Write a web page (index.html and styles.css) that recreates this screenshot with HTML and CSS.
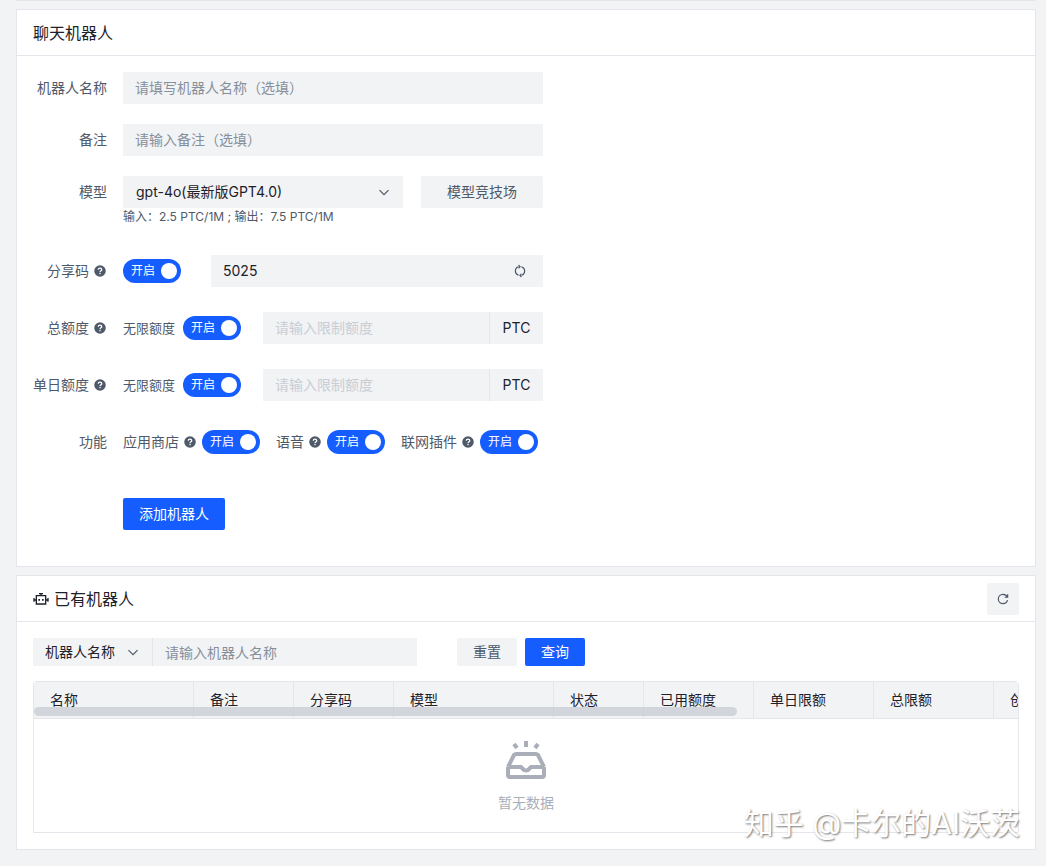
FILE: index.html
```
<!DOCTYPE html>
<html lang="zh-CN">
<head>
	<meta charset="UTF-8">
	<meta name="viewport" content="width=device-width, initial-scale=1.0">
	<title>聊天机器人</title>
	<link rel="stylesheet" href="styles.css">
</head>
<body>
	<svg class="symbols">
		<symbol id="icon-help" viewBox="0 0 48 48">
			<circle cx="24" cy="24" r="23" fill="currentColor"/>
			<path d="M17 19c0-4 3-7 7-7s7 3 7 6.500c0 5-7 5-7 10.500M24 32v5" fill="none" stroke="#fff" stroke-width="5"/>
		</symbol>
		<symbol id="icon-down" viewBox="0 0 48 48">
			<path d="M39.600 17.443 24.043 33 8.487 17.443" fill="none" stroke="currentColor" stroke-width="4"/>
		</symbol>
	</svg>
	<div class="prev-card"></div>
	<div class="card">
		<div class="card-header">
			<h2>聊天机器人</h2>
		</div>
		<form class="bot-form">
			<div class="form-item">
				<label class="item-label" for="bot-name">机器人名称</label>
				<div class="item-content">
					<input class="input" type="text" id="bot-name" placeholder="请填写机器人名称（选填）">
				</div>
			</div>
			<div class="form-item">
				<label class="item-label" for="remark">备注</label>
				<div class="item-content">
					<input class="input" type="text" id="remark" placeholder="请输入备注（选填）">
				</div>
			</div>
			<div class="form-item item-model">
				<label class="item-label" for="model">模型</label>
				<div class="item-content">
					<div class="select">
						<select id="model">
							<option>gpt-4o(最新版GPT4.0)</option>
						</select>
						<svg class="icon"><use href="#icon-down"/></svg>
					</div>
					<button type="button" class="btn btn-arena">模型竞技场</button>
				</div>
				<p class="price">输入：2.5 PTC/1M ; 输出：7.5 PTC/1M</p>
			</div>
			<div class="form-item item-wide">
				<label class="item-label" for="share-code">分享码 <svg class="help"><use href="#icon-help"/></svg></label>
				<div class="item-content">
					<label class="switch"><input type="checkbox" checked><span>开启</span></label>
					<div class="code">
						<input class="input" type="text" id="share-code" value="5025">
						<button type="button" class="sync" aria-label="刷新分享码">
							<svg class="icon" viewBox="0 0 48 48" fill="none" stroke="currentColor" stroke-width="4">
								<path d="M19 38.500C12 36 8 30 8 24c0-7 4-12 9-14.500M29 9.500C36 12 40 18 40 24c0 7-4 12-9 14.500"/>
								<path d="m20 3 6 6-6 6zM28 33l-6 6 6 6z" fill="currentColor" stroke-width="2"/>
							</svg>
						</button>
					</div>
				</div>
			</div>
			<div class="form-item item-wide">
				<label class="item-label" for="total">总额度 <svg class="help"><use href="#icon-help"/></svg></label>
				<div class="item-content">
					<label class="switch-text" for="total-unlimited">无限额度</label>
					<label class="switch"><input type="checkbox" id="total-unlimited" checked><span>开启</span></label>
					<div class="quota">
						<input class="input" type="text" id="total" placeholder="请输入限制额度" disabled>
						<span class="unit">PTC</span>
					</div>
				</div>
			</div>
			<div class="form-item item-wide">
				<label class="item-label" for="daily">单日额度 <svg class="help"><use href="#icon-help"/></svg></label>
				<div class="item-content">
					<label class="switch-text" for="daily-unlimited">无限额度</label>
					<label class="switch"><input type="checkbox" id="daily-unlimited" checked><span>开启</span></label>
					<div class="quota">
						<input class="input" type="text" id="daily" placeholder="请输入限制额度" disabled>
						<span class="unit">PTC</span>
					</div>
				</div>
			</div>
			<div class="form-item item-feature">
				<span class="item-label">功能</span>
				<div class="item-content">
					<div class="feature">
						<label for="store">应用商店</label>
						<svg class="help"><use href="#icon-help"/></svg>
						<label class="switch"><input type="checkbox" id="store" checked><span>开启</span></label>
					</div>
					<div class="feature">
						<label for="voice">语音</label>
						<svg class="help"><use href="#icon-help"/></svg>
						<label class="switch"><input type="checkbox" id="voice" checked><span>开启</span></label>
					</div>
					<div class="feature">
						<label for="plugin">联网插件</label>
						<svg class="help"><use href="#icon-help"/></svg>
						<label class="switch"><input type="checkbox" id="plugin" checked><span>开启</span></label>
					</div>
				</div>
			</div>
			<button type="button" class="btn btn-primary btn-add">添加机器人</button>
		</form>
	</div>

	<div class="card">
		<div class="card-header">
			<svg class="robot" viewBox="0 0 48 48" fill="none" stroke="currentColor" stroke-width="4">
				<path d="M10 14h28v25H10zM24 14V6M18 8h12M3 21v11M45 21v11M3 27h6M39 27h6"/>
				<path d="M16 24h5v5h-5zM27 24h5v5h-5z" fill="currentColor" stroke="none"/>
			</svg>
			<h2>已有机器人</h2>
			<button type="button" class="btn btn-refresh" aria-label="刷新">
				<svg class="icon" viewBox="0 0 48 48" fill="none" stroke="currentColor" stroke-width="4">
					<path d="M38.837 18C36.463 12.136 30.715 8 24 8 15.163 8 8 15.163 8 24s7.163 16 16 16c7.455 0 13.720-5.100 15.496-12M40 8v10H30"/>
				</svg>
			</button>
		</div>
		<div class="list-body">
			<div class="search">
				<div class="search-group">
					<div class="select">
						<select aria-label="搜索字段">
							<option>机器人名称</option>
						</select>
						<svg class="icon"><use href="#icon-down"/></svg>
					</div>
					<input class="input" type="text" aria-label="搜索内容" placeholder="请输入机器人名称">
				</div>
				<button type="button" class="btn btn-small">重置</button>
				<button type="button" class="btn btn-small btn-primary">查询</button>
			</div>
			<div class="table-box">
				<div class="table-scroll">
					<table>
						<colgroup>
							<col class="w160"><col class="w100"><col class="w100"><col class="w160"><col class="w90"><col class="w110"><col class="w120"><col class="w120"><col class="w160">
						</colgroup>
						<thead>
							<tr>
								<th>名称</th>
								<th>备注</th>
								<th>分享码</th>
								<th>模型</th>
								<th>状态</th>
								<th>已用额度</th>
								<th>单日限额</th>
								<th>总限额</th>
								<th>创建</th>
							</tr>
						</thead>
					</table>
				</div>
				<div class="scrollbar"></div>
				<div class="empty">
					<svg viewBox="0 0 48 48" fill="none" stroke="currentColor" stroke-width="4">
						<path d="M24 4v6M33 11l3-4M15 11l-3-4M6 30l6-12q1-1 2-1h20q1 0 2 1l6 12M6 30v8q0 2 2 2h32q2 0 2-2v-8M6 30h13l3 3q2 1 4 0l3-3h13"/>
					</svg>
					<p>暂无数据</p>
				</div>
			</div>
		</div>
		<div class="watermark">知乎 @卡尔的AI沃茨</div>
	</div>
</body>
</html>
```

FILE: styles.css
```
* {
	margin: 0;
	padding: 0;
	box-sizing: border-box;
}
body {
	padding: 0 10px 16px 16px;
	background: #f2f3f5;
	color: #1d2129;
	font-family: Inter, "Noto Sans CJK SC", sans-serif;
	font-size: 14px;
	line-height: 22px;
}
input,button,select {
	border: none;
	outline: none;
	font: inherit;
	color: inherit;
}
button {
	cursor: pointer;
}
.symbols {
	display: none;
}
.icon {
	width: 14px;
	height: 14px;
}
.help {
	flex: none;
	width: 12px;
	height: 12px;
	color: #4e5969;
}
.prev-card {
	height: 1px;
	background: #e5e6eb;
}

/* 卡片 */
.card {
	position: relative;
	margin-top: 8px;
	background: #fff;
	border: 1px solid #e5e6eb;
}
.card-header {
	display: flex;
	align-items: center;
	height: 46px;
	padding: 0 16px;
	border-bottom: 1px solid #e5e6eb;
}
.card-header h2 {
	font-size: 16px;
	font-weight: 400;
	line-height: 24px;
}
.robot {
	width: 16px;
	height: 16px;
	margin-right: 5px;
}

/* 按钮 */
.btn {
	height: 32px;
	background: #f2f3f5;
	color: #4e5969;
	border-radius: 2px;
}
.btn-primary {
	background: #165dff;
	color: #fff;
}
.btn-small {
	width: 60px;
	height: 28px;
}
.btn-refresh {
	display: flex;
	align-items: center;
	justify-content: center;
	width: 32px;
	margin-left: auto;
}
.btn-add {
	width: 102px;
	margin: 40px 0 0 90px;
}
.btn-arena {
	width: 122px;
	margin-left: 18px;
}

/* 输入框 */
.input {
	width: 100%;
	height: 32px;
	padding: 0 12px 1px;
	background: #f2f3f5;
}
.input::placeholder {
	color: #86909c;
	opacity: 1;
}
.input:disabled::placeholder {
	color: #c9cdd4;
}
.select {
	position: relative;
	flex: 1;
}
.select select {
	appearance: none;
	width: 100%;
	height: 32px;
	padding: 0 13px;
	background: #f2f3f5;
}
.select .icon {
	position: absolute;
	right: 12px;
	top: 50%;
	margin-top: -7px;
	color: #4e5969;
	pointer-events: none;
}

/* 表单 */
.bot-form {
	padding: 16px 16px 36px;
}
.form-item {
	display: grid;
	grid-template-columns: 74px minmax(0, 420px);
	column-gap: 16px;
	align-items: center;
	margin-bottom: 20px;
}
.item-label {
	display: flex;
	align-items: center;
	justify-content: flex-end;
	gap: 5px;
	color: #4e5969;
	white-space: nowrap;
}
.item-label .help {
	margin-right: 1px;
}
.item-content {
	display: flex;
	align-items: center;
	min-height: 32px;
	color: #4e5969;
}
.item-content .input,
.item-content .select {
	color: #1d2129;
}
.item-model,
.item-wide {
	margin-bottom: 25px;
}
.price {
	grid-column: 2;
	margin-bottom: 4px;
	color: #4e5969;
	font-size: 12px;
	line-height: 18px;
}
.switch {
	position: relative;
	flex: none;
	height: 24px;
}
.switch input {
	appearance: none;
	display: block;
	width: 58px;
	height: 24px;
	background: #c9cdd4;
	border-radius: 12px;
}
.switch input:checked {
	background: #165dff;
}
.switch input::after {
	content: "";
	position: absolute;
	right: 4px;
	top: 4px;
	width: 16px;
	height: 16px;
	background: #fff;
	border-radius: 50%;
}
.switch span {
	position: absolute;
	left: 8px;
	top: 0;
	color: #fff;
	font-size: 12px;
	line-height: 24px;
}
.switch-text {
	margin-right: 8px;
	font-size: 13px;
}
.code {
	position: relative;
	flex: 1;
	margin-left: 30px;
}
.sync {
	position: absolute;
	right: 16px;
	top: 9px;
	width: 14px;
	height: 14px;
	background: none;
	color: #4e5969;
}
.sync .icon {
	display: block;
}
.quota {
	display: flex;
	flex: 1;
	margin-left: 22px;
}
.quota .input {
	flex: 1;
	min-width: 0;
}
.unit {
	width: 54px;
	background: #f2f3f5;
	border-left: 1px solid #e5e6eb;
	color: #1d2129;
	line-height: 32px;
	text-align: center;
}
.item-feature {
	margin-bottom: 0;
}
.item-feature .item-content {
	gap: 16px;
}
.feature {
	display: flex;
	align-items: center;
	white-space: nowrap;
}
.feature .help {
	margin: 0 6px 0 5px;
}

/* 列表 */
.list-body {
	padding: 16px;
}
.search {
	display: flex;
	gap: 8px;
	margin-bottom: 15px;
}
.search-group {
	display: flex;
	width: 384px;
	margin-right: 32px;
}
.search-group .select {
	flex: none;
	width: 120px;
	border-right: 1px solid #e5e6eb;
}
.search-group .input,
.search-group select {
	height: 28px;
	padding: 0 12px;
}
.table-box {
	position: relative;
	border: 1px solid #e5e6eb;
	border-radius: 4px 4px 0 0;
}
.table-scroll {
	overflow: hidden;
}
table {
	width: 1120px;
	table-layout: fixed;
	border-collapse: separate;
	border-spacing: 0;
}
th {
	height: 37px;
	padding: 0 16px;
	background: #f2f3f5;
	border-right: 1px solid #e5e6eb;
	border-bottom: 1px solid #e5e6eb;
	font-weight: 400;
	text-align: left;
}
.w90 {
	width: 90px;
}
.w100 {
	width: 100px;
}
.w110 {
	width: 110px;
}
.w120 {
	width: 120px;
}
.w160 {
	width: 160px;
}
.scrollbar {
	position: absolute;
	left: 0;
	top: 25px;
	width: 71.4%;
	height: 9px;
	background: #c9cdd4;
	border-radius: 5px;
	opacity: .8;
}
.empty {
	padding: 18px 0;
	color: #a9aeb8;
	text-align: center;
}
.empty svg {
	display: block;
	width: 48px;
	height: 48px;
	margin: 0 auto 7px;
}
.watermark {
	position: absolute;
	right: 15px;
	bottom: 6px;
	color: #fff;
	font-size: 30px;
	line-height: 40px;
	text-shadow: 1px 1px 2px #777;
	white-space: nowrap;
}
```
